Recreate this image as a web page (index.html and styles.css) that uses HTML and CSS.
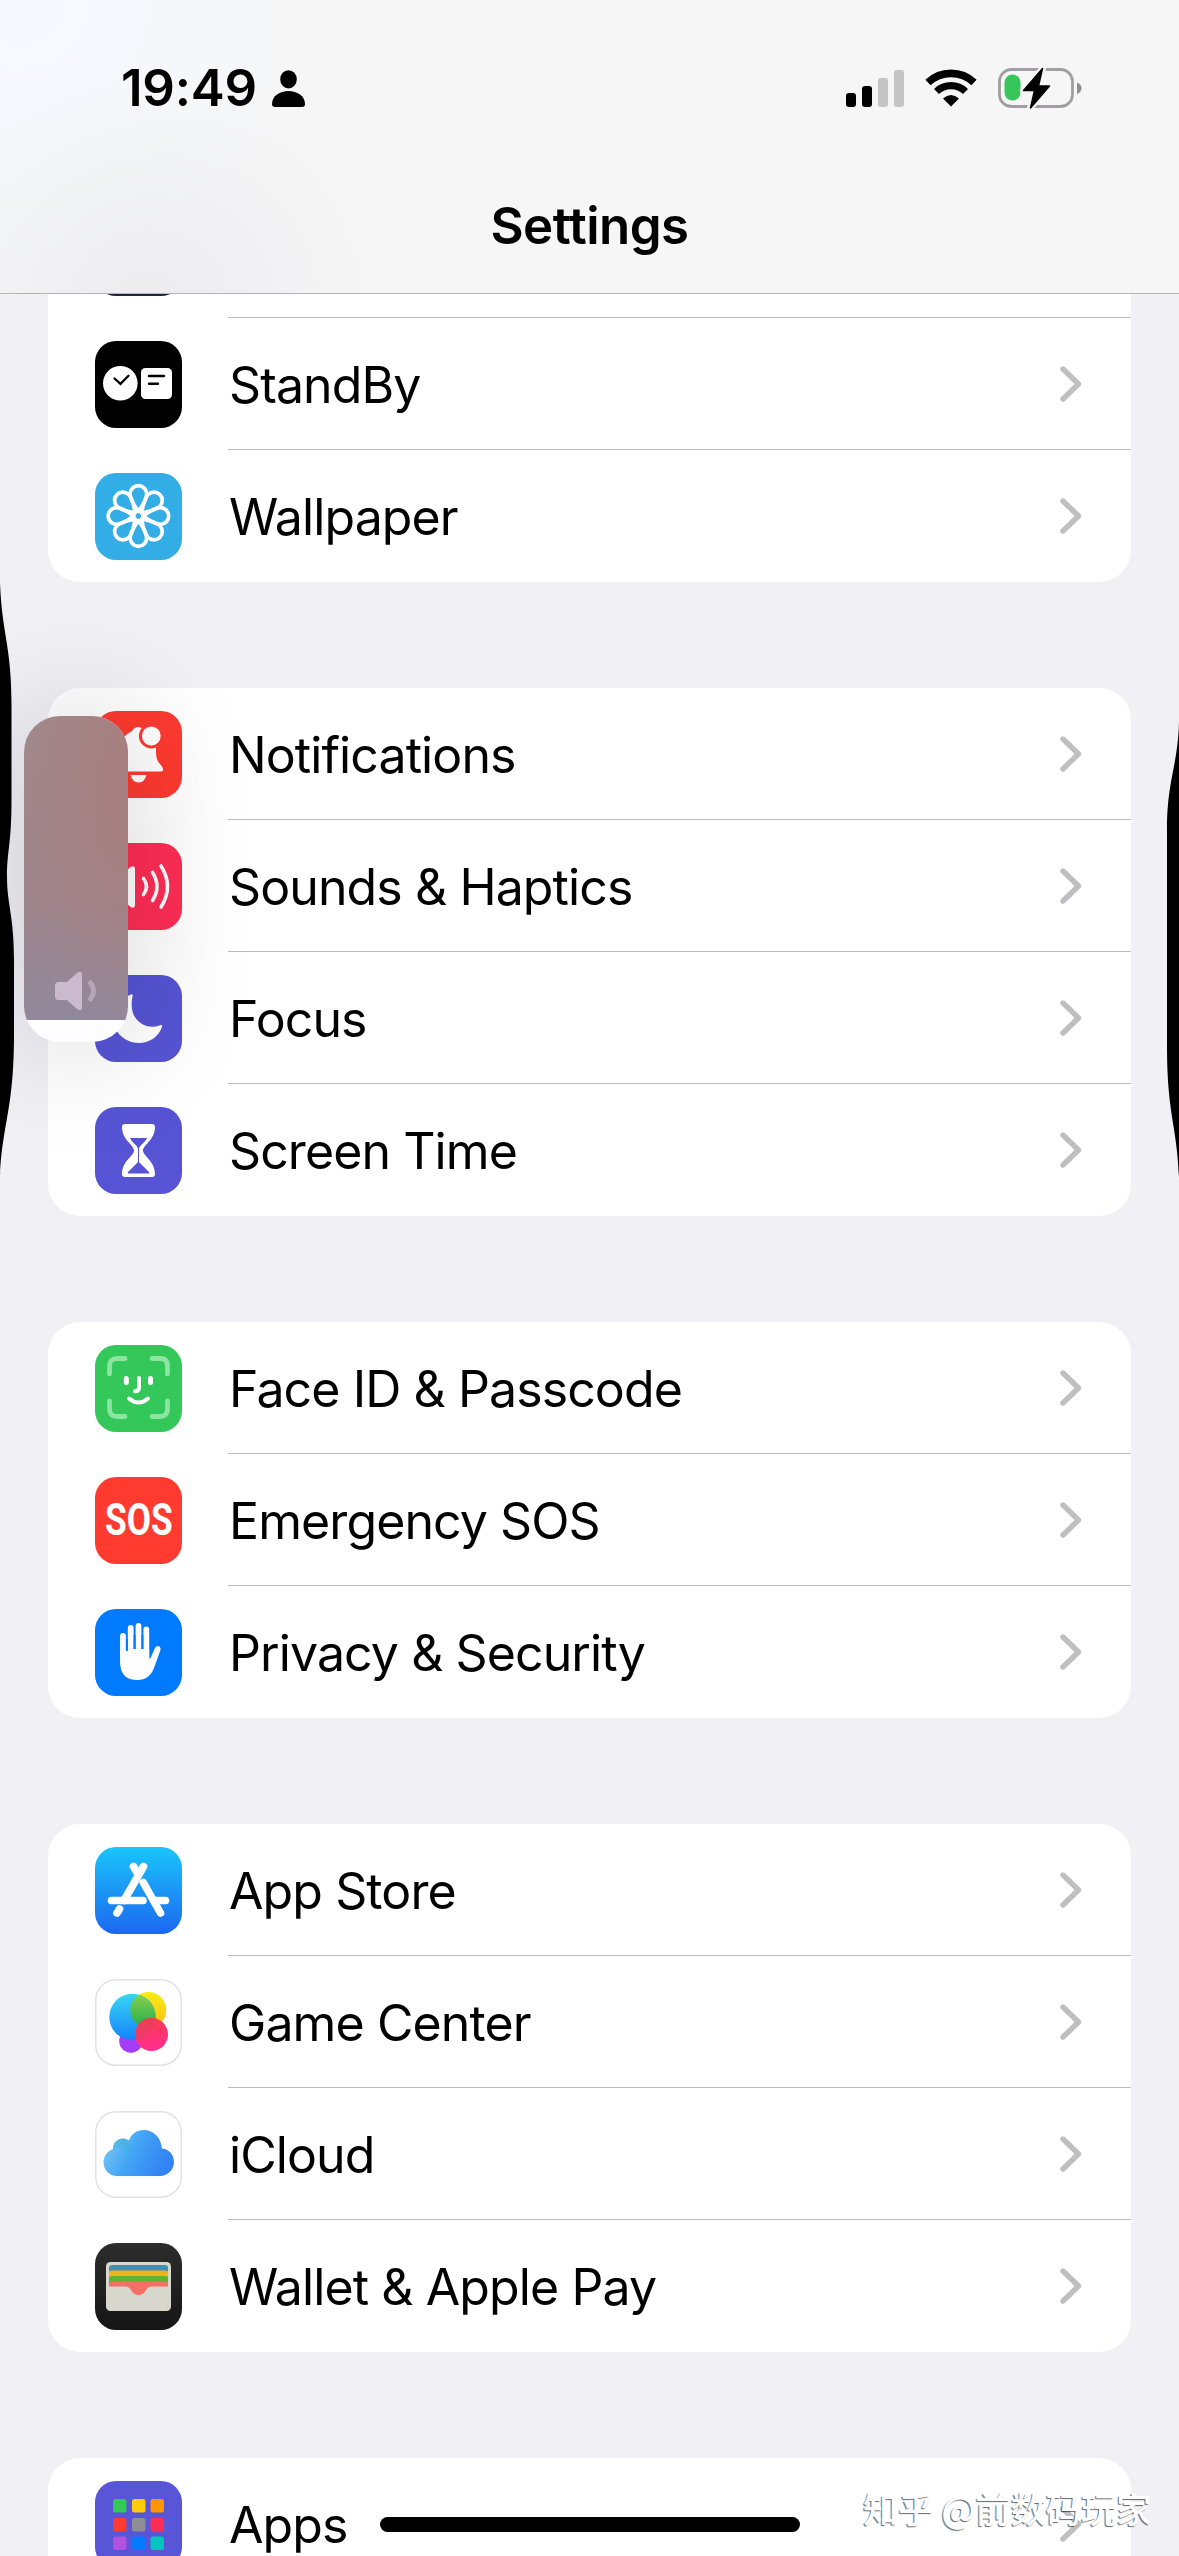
FILE: index.html
```
<!DOCTYPE html>
<html lang="en">
	<head>
		<meta charset="utf-8">
		<title>Settings</title>
		<link rel="stylesheet" href="styles.css">
	</head>
	<body>
		<svg class="defs" width="0" height="0">
			<symbol id="chevron" viewBox="0 0 22 36">
				<path d="M3 3 L18.5 18 L3 33" fill="none" stroke="#bfbfc1" stroke-width="5.4" stroke-linecap="round" stroke-linejoin="round"/>
			</symbol>
		</svg>
		<div class="screen">
		<header class="topbar">
			<div class="status">
				<div class="status-left">
					<span class="time">19:49</span>
					<svg class="person" viewBox="0 0 33 37">
						<ellipse cx="16.5" cy="9.3" rx="8.3" ry="9.1"/>
						<path d="M3 37 Q0 37 0 34 C0 26 8 21 16.5 21 C25 21 33 26 33 34 Q33 37 30 37 Z"/>
					</svg>
				</div>
				<div class="status-right">
					<svg class="signal" viewBox="0 0 58 37">
						<rect x="0" y="23" width="10" height="14" rx="3"/>
						<rect x="16" y="16" width="10" height="21" rx="3"/>
						<rect x="32" y="8" width="10" height="29" rx="3" fill="#c4c4c4"/>
						<rect x="48" y="0" width="10" height="37" rx="3" fill="#c4c4c4"/>
					</svg>
					<svg class="wifi" viewBox="0 0 52 38">
						<path d="M3 13.5 A33.5 33.5 0 0 1 49 13.5" fill="none" stroke="#000" stroke-width="7.6"/>
						<path d="M11.5 22.5 A21 21 0 0 1 40.5 22.5" fill="none" stroke="#000" stroke-width="7.2"/>
						<path d="M18 29.5 Q26 22.5 34 29.5 L26 37.5 Z"/>
					</svg>
					<svg class="battery" viewBox="0 0 84 42">
						<rect x="1.5" y="2.5" width="73" height="37" rx="12" fill="none" stroke="#a09ea0" stroke-width="2.8"/>
						<path d="M79 15.5 Q83.5 17 83.5 21 Q83.5 25 79 27 Z" fill="#8e8e90"/>
						<rect x="6.5" y="7.5" width="16" height="26" rx="8" fill="#35c759"/>
						<path d="M45 1 L25 23.5 H36 L32 41.5 L52 18.5 H41 Z" stroke="#f6f6f6" stroke-width="6" stroke-linejoin="round"/>
						<path d="M44.5 1.500 L25.5 23.5 H36.5 L32.5 41 L51.5 19 H40.5 Z" stroke="#000" stroke-width="1.5" stroke-linejoin="round"/>
					</svg>
				</div>
			</div>
			<h1 class="title">Settings</h1>
		</header>

		<main class="list">
			<section class="group first">
				<div class="row"><div class="icon navy"></div><div class="cell"></div></div>
				<div class="row">
					<svg class="icon" viewBox="0 0 87 87">
						<rect width="87" height="87"/>
						<circle cx="25.3" cy="42.3" r="17.3" fill="#fff"/>
						<path d="M19.5 37.5 L25.5 42.8 L33.5 34.8" fill="none" stroke="#000" stroke-width="2.3" stroke-linecap="round"/>
						<rect x="46" y="27" width="31" height="31" rx="4.5" fill="#fff"/>
						<path d="M54 35 H69 M54 42.7 H63" stroke="#000" stroke-width="2.4" stroke-linecap="round"/>
					</svg>
					<div class="cell"><span>StandBy</span><svg class="chevron"><use href="#chevron"/></svg></div>
				</div>
				<div class="row">
					<svg class="icon" viewBox="0 0 87 87">
						<defs><path id="petal" d="M0 -4.5 C-3 -9 -8.3 -16 -8.3 -22 A8.3 8.3 0 0 1 8.3 -22 C8.3 -16 3 -9 0 -4.5 Z"/></defs>
						<rect width="87" height="87" fill="#32ade6"/>
						<g transform="translate(43.4 43)" fill="none" stroke="#fff" stroke-width="3.7" stroke-linejoin="round">
							<use href="#petal"/>
							<use href="#petal" transform="rotate(45)"/>
							<use href="#petal" transform="rotate(90)"/>
							<use href="#petal" transform="rotate(135)"/>
							<use href="#petal" transform="rotate(180)"/>
							<use href="#petal" transform="rotate(225)"/>
							<use href="#petal" transform="rotate(270)"/>
							<use href="#petal" transform="rotate(315)"/>
							<circle r="4.8" stroke-width="2.6"/>
						</g>
					</svg>
					<div class="cell"><span>Wallpaper</span><svg class="chevron"><use href="#chevron"/></svg></div>
				</div>
			</section>

			<section class="group">
				<div class="row">
					<svg class="icon" viewBox="0 0 87 87">
						<rect width="87" height="87" fill="#ff3a30"/>
						<path d="M21 60.5 Q18 60.5 18.5 57 C20 54 25 50 25.5 44 C26 34 26 26 34 22 Q37 20.5 38.5 18 Q43 14 48 18 L61 36 C61 44 61 49 65 53 Q68.5 56.5 68 59 Q67.5 60.5 66 60.5 Z" fill="#fff"/>
						<path d="M35.5 64 H51.5 Q49.5 71.5 43.5 71.5 Q37.5 71.5 35.5 64 Z" fill="#fff"/>
						<circle cx="56.3" cy="25" r="12.4" fill="#ff3a30"/>
						<circle cx="56.3" cy="25" r="9.4" fill="#fff"/>
					</svg>
					<div class="cell"><span>Notifications</span><svg class="chevron"><use href="#chevron"/></svg></div>
				</div>
				<div class="row">
					<svg class="icon" viewBox="0 0 87 87">
						<rect width="87" height="87" fill="#ff2d55"/>
						<path d="M12 36 H22 L35 24.5 Q40 21.5 40 26 V62 Q40 66.5 35 63.5 L22 52 H12 Z" fill="#fff"/>
						<path d="M48.5 35.5 Q54.5 43.5 48.5 51.5 M57.5 29.5 Q66.5 43.5 57.5 57.5 M66 23 Q79 43.5 66 64" fill="none" stroke="#fff" stroke-width="3.6" stroke-linecap="round"/>
					</svg>
					<div class="cell"><span>Sounds &amp; Haptics</span><svg class="chevron"><use href="#chevron"/></svg></div>
				</div>
				<div class="row">
					<svg class="icon" viewBox="0 0 87 87">
						<rect width="87" height="87" fill="#5654d4"/>
						<path d="M36 19.5 C23 24 18 34 18 43 C18 57 30 68 44 68 C55 68 64 61 67 52 C67.5 50 66.5 49.5 64.5 50.5 C59 52.5 53 52 48 49.5 C38 44 35 34 37.5 21.5 C38 19.5 37.5 19 36 19.5 Z" fill="#fff"/>
					</svg>
					<div class="cell"><span>Focus</span><svg class="chevron"><use href="#chevron"/></svg></div>
				</div>
				<div class="row">
					<svg class="icon" viewBox="0 0 87 87">
						<rect width="87" height="87" fill="#5654d4"/>
						<path d="M30 17 H57 Q60 17 60 20 C60 33 48 38 48 43.5 C48 49 60 54 60 67 Q60 70 57 70 H30 Q27 70 27 67 C27 54 39 49 39 43.5 C39 38 27 33 27 20 Q27 17 30 17 Z" fill="#fff"/>
						<path d="M35 31 H52 C50 36 44.5 38 44 42 V55 L54 65 Q55 66.5 53 66.5 H34 Q32 66.5 33 65 L43 55 V42 C42.5 38 37 36 35 31 Z" fill="#5654d4"/>
					</svg>
					<div class="cell"><span>Screen Time</span><svg class="chevron"><use href="#chevron"/></svg></div>
				</div>
			</section>

			<section class="group">
				<div class="row">
					<svg class="icon" viewBox="0 0 87 87">
						<rect width="87" height="87" fill="#34c759"/>
						<path d="M14.5 29 V21 Q14.5 13.5 22 13.5 H30 M57 13.5 H65 Q72.5 13.5 72.5 21 V29 M72.5 56 V64 Q72.5 71.5 65 71.5 H57 M30 71.5 H22 Q14.5 71.5 14.5 64 V56" fill="none" stroke="#8ce5a0" stroke-width="4.8" stroke-linecap="round"/>
						<path d="M31.3 33.5 V37.5 M55.5 33.5 V37.5" stroke="#fff" stroke-width="5" stroke-linecap="round"/>
						<path d="M44 33 V42.5 Q44 46.3 40 46.3 M34 53.5 Q43.5 61.5 53 53.5" fill="none" stroke="#fff" stroke-width="4" stroke-linecap="round"/>
					</svg>
					<div class="cell"><span>Face ID &amp; Passcode</span><svg class="chevron"><use href="#chevron"/></svg></div>
				</div>
				<div class="row">
					<div class="icon sos"><span>SOS</span></div>
					<div class="cell"><span>Emergency SOS</span><svg class="chevron"><use href="#chevron"/></svg></div>
				</div>
				<div class="row">
					<svg class="icon" viewBox="0 0 87 87">
						<rect width="87" height="87" fill="#007aff"/>
						<path d="M28 27 V50 M35.7 19 V46 M43.5 17 V46 M51.3 20.5 V50" stroke="#fff" stroke-width="5.8" stroke-linecap="round"/>
						<path d="M25.1 40 H54.2 V49.5 Q55 50 56 48 L60 39 Q62 36 64.5 37.5 Q66 38.5 65.5 41 L59 59 Q54.5 71 42.5 71 Q25.1 71 25.1 53 Z" fill="#fff"/>
						<path d="M31.9 30 V42 M39.6 26 V40 M47.4 26 V40" stroke="#007aff" stroke-width="2"/>
					</svg>
					<div class="cell"><span>Privacy &amp; Security</span><svg class="chevron"><use href="#chevron"/></svg></div>
				</div>
			</section>

			<section class="group">
				<div class="row">
					<svg class="icon" viewBox="0 0 87 87">
						<defs><linearGradient id="store" x2="0" y2="1"><stop offset="0" stop-color="#19c5fb"/><stop offset="1" stop-color="#1c68f0"/></linearGradient></defs>
						<rect width="87" height="87" fill="url(#store)"/>
						<g fill="none" stroke="#fff" stroke-width="7.6" stroke-linecap="round">
							<path d="M16.5 53.5 H48"/>
							<path d="M38.5 19.5 L42 25.5"/>
							<path d="M24.5 62 L22 66"/>
							<path d="M48.3 35.5 L65.5 66"/>
							<path d="M48.5 19.5 L29 53.5"/>
							<path d="M61 53.5 H70.5"/>
						</g>
					</svg>
					<div class="cell"><span>App Store</span><svg class="chevron"><use href="#chevron"/></svg></div>
				</div>
				<div class="row">
					<svg class="icon bordered" viewBox="0 0 87 87">
						<defs>
							<linearGradient id="gcBlue" x2="0" y2="1"><stop offset="0" stop-color="#38d6f5"/><stop offset="1" stop-color="#1583fb"/></linearGradient>
							<linearGradient id="gcYellow" x2="0" y2="1"><stop offset="0" stop-color="#f7ec17"/><stop offset="1" stop-color="#ffbb12"/></linearGradient>
							<linearGradient id="gcGreen" x2="0" y2="1"><stop offset="0" stop-color="#8ed24e"/><stop offset="1" stop-color="#22ad4c"/></linearGradient>
							<linearGradient id="gcRed" x2="0" y2="1"><stop offset="0" stop-color="#fb3c4f"/><stop offset="1" stop-color="#ff2d92"/></linearGradient>
							<clipPath id="gcClip"><circle cx="37.500" cy="38" r="23.200"/></clipPath>
						</defs>
						<circle cx="36" cy="62" r="11.8" fill="#a63cf5"/>
						<circle cx="53.3" cy="31" r="18" fill="url(#gcYellow)"/>
						<circle cx="37.5" cy="38" r="23.2" fill="url(#gcBlue)"/>
						<circle cx="53.3" cy="31" r="18" fill="url(#gcGreen)" clip-path="url(#gcClip)"/>
						<circle cx="56.5" cy="55.5" r="16.5" fill="url(#gcRed)"/>
						<circle cx="56.5" cy="55.5" r="16.5" fill="#e0405c" opacity=".5" clip-path="url(#gcClip)"/>
					</svg>
					<div class="cell"><span>Game Center</span><svg class="chevron"><use href="#chevron"/></svg></div>
				</div>
				<div class="row">
					<svg class="icon bordered" viewBox="0 0 87 87">
						<defs><linearGradient id="cloud" x2="1" y2=".35"><stop offset="0" stop-color="#86d2f3"/><stop offset=".5" stop-color="#44a6f5"/><stop offset="1" stop-color="#3384f4"/></linearGradient></defs>
						<path d="M22 65 C14 65 8.5 58.5 8.5 51.5 C8.5 45 12.5 40 18 38 C18 31 23 27.5 28 27.5 C30.5 27.5 32.5 28.5 34 29.5 C36 23 42 19 48.5 19 C58 19 66 26 67 37.5 C74 38 79 44 79 51 C79 58.5 73 65 65 65 Z" fill="url(#cloud)"/>
						<path d="M18 38 C18 31 23 27.5 28 27.5 C33 27.5 36.5 31.5 36.5 35 C36.5 38 34 40 31 41 C31 36 25 34 18 38 Z" fill="#3fb3dc" opacity=".5"/>
					</svg>
					<div class="cell"><span>iCloud</span><svg class="chevron"><use href="#chevron"/></svg></div>
				</div>
				<div class="row">
					<svg class="icon" viewBox="0 0 87 87">
						<defs><linearGradient id="wallet" x2="0" y2="1"><stop offset="0" stop-color="#2d2d2d"/><stop offset="1" stop-color="#151515"/></linearGradient></defs>
						<rect width="87" height="87" fill="url(#wallet)"/>
						<rect x="11" y="19" width="65" height="49" rx="4.5" fill="#d8d7cd"/>
						<path d="M14 24.5 Q14 22 17 22 H70 Q73 22 73 24.5 V29 H14 Z" fill="#3f8fb8"/>
						<path d="M14 29 Q14 27.5 17 27.5 H70 Q73 27.5 73 29 V34 H14 Z" fill="#efb31b"/>
						<path d="M14 34.5 Q14 33 17 33 H70 Q73 33 73 34.5 V40 H14 Z" fill="#62b22f"/>
						<path d="M14 40 Q14 38.5 17 38.5 H70 Q73 38.5 73 40 V43.5 H56 Q53 43.5 51 47 Q48.5 52 43.5 52 Q38.5 52 36 47 Q34 43.5 31 43.5 H14 Z" fill="#f47067"/>
					</svg>
					<div class="cell"><span>Wallet &amp; Apple Pay</span><svg class="chevron"><use href="#chevron"/></svg></div>
				</div>
			</section>

			<section class="group last">
				<div class="row">
					<svg class="icon" viewBox="0 0 87 87">
						<rect width="87" height="87" fill="#5856d6"/>
						<rect x="18" y="18" width="13.5" height="13.5" rx="2.5" fill="#34c759"/>
						<rect x="37" y="18" width="13.5" height="13.5" rx="2.5" fill="#ffcc0a"/>
						<rect x="55.5" y="18" width="13.5" height="13.5" rx="2.5" fill="#ff9500"/>
						<rect x="18" y="37" width="13.5" height="13.5" rx="2.5" fill="#ff3b30"/>
						<rect x="37" y="37" width="13.5" height="13.5" rx="2.5" fill="#8e8e93"/>
						<rect x="55.5" y="37" width="13.5" height="13.5" rx="2.5" fill="#ff2d55"/>
						<rect x="18" y="55.5" width="13.5" height="13.5" rx="2.5" fill="#af52de"/>
						<rect x="37" y="55.5" width="13.5" height="13.5" rx="2.5" fill="#007aff"/>
						<rect x="55.5" y="55.5" width="13.5" height="13.5" rx="2.5" fill="#00c7be"/>
					</svg>
					<div class="cell"><span>Apps</span><svg class="chevron"><use href="#chevron"/></svg></div>
				</div>
			</section>
		</main>

		<!-- screen edges squeezed in by the hardware buttons -->
		<svg class="edge left" viewBox="0 0 16 600"><path d="M0 8 C2 60 11.5 70 11.5 130 V225 C11.5 270 7 275 7 302 C7 330 14 340 14 385 V460 C14 535 2 550 0 602 Z"/></svg>
		<svg class="edge right" viewBox="0 0 14 460"><path d="M14 2 C13 45 2 60 2 110 V325 C2 395 12 405 14 457 Z"/></svg>

		<div class="volume">
			<div class="volume-rest">
				<svg viewBox="0 0 42 40">
					<path d="M3.5 11 H12 L22 2 Q27 -1.500 27 4 V36 Q27 41.5 22 38 L12 29 H3.5 Q0 29 0 25.5 V14.5 Q0 11 3.5 11 Z" fill="#cbbacd"/>
					<path d="M35.5 12 Q41.5 20 35.5 28" fill="none" stroke="#b7a5bb" stroke-width="5" stroke-linecap="round"/>
				</svg>
			</div>
		</div>
		<div class="home-indicator"></div>
		<div class="watermark">知乎 @前数码玩家</div>
		</div>
	</body>
</html>
```
FILE: styles.css
```
* {
	box-sizing: border-box;
}
body {
	margin: 0;
	background: #f1f0f5;
	color: #000;
	font-family: Inter, "Liberation Sans", sans-serif;
}
.defs {
	display: block;
}
.screen {
	position: relative;
	width: 1179px;
	height: 2556px;
	overflow: hidden;
}
.topbar {
	position: relative;
	z-index: 1;
	height: 294px;
	border-bottom: 1px solid #b4b4b7;
	background:
		radial-gradient(circle at 150px 310px, #ececf0 0, rgba(240, 240, 243, 0) 230px),
		radial-gradient(circle at 20px 0, #f5f9fe 0, rgba(246, 248, 253, .8) 140px, rgba(246, 246, 246, 0) 300px),
		#f6f6f6;
}
.status {
	display: flex;
	justify-content: space-between;
	align-items: center;
	height: 176px;
	padding: 0 97px 0 121px;
}
.status-left, .status-right {
	display: flex;
	align-items: center;
}
.time {
	font-size: 51px;
	font-weight: 600;
	line-height: 60px;
	letter-spacing: -.2px;
}
.person {
	width: 33px;
	height: 37px;
	margin-left: 15px;
}
.signal {
	width: 58px;
	height: 37px;
}
.wifi {
	width: 52px;
	height: 38px;
	margin-left: 21px;
}
.battery {
	width: 84px;
	height: 42px;
	margin-left: 21px;
}
.title {
	margin: 0;
	padding-top: 20px;
	font-size: 51px;
	font-weight: 600;
	line-height: 60px;
	letter-spacing: -.5px;
	text-align: center;
}
.list {
	padding: 0 48px;
}
.group {
	margin-bottom: 106px;
	border-radius: 32px;
	background: #fff;
	overflow: hidden;
}
/* scrolled partly under the top bar */
.group.first {
	margin-top: -108px;
}
/* runs off the bottom of the screen */
.group.last {
	height: 98px;
	margin-bottom: 0;
	border-radius: 32px 32px 0 0;
}
.row {
	display: flex;
	align-items: flex-start;
	height: 132px;
	padding-left: 47px;
}
.icon {
	flex: none;
	width: 87px;
	height: 87px;
	margin-top: 23px;
	border-radius: 21px;
}
.navy {
	background: #1c2747;
}
.bordered {
	box-shadow: inset 0 0 0 1.5px #e2e2e5;
}
.sos {
	display: flex;
	justify-content: center;
	align-items: center;
	background: #ff3b30;
	color: #fff;
	font: 700 43.5px/54px Roboto, sans-serif;
}
.sos span {
	transform: scaleX(.81);
}
.cell {
	flex: 1;
	display: flex;
	justify-content: space-between;
	align-items: center;
	height: 132px;
	margin-left: 46px;
	padding: 1px 49px 0 0;
	border-bottom: 1px solid #bcbcbf;
	font-size: 50px;
	letter-spacing: -.9px;
}
.cell span {
	padding: 2px 0 0 1px;
}
.row:last-child .cell {
	border-bottom-color: transparent;
}
.chevron {
	width: 22px;
	height: 36px;
}
.edge {
	position: absolute;
}
.edge.left {
	left: 0;
	top: 575px;
	width: 16px;
	height: 600px;
}
.edge.right {
	right: 0;
	top: 720px;
	width: 14px;
	height: 460px;
}
.volume {
	position: absolute;
	left: 24px;
	top: 716px;
	width: 104px;
	height: 326px;
	border-radius: 36px;
	overflow: hidden;
	background: #fdfdff;
	box-shadow: 0 0 120px 10px rgba(0, 0, 20, .15);
}
.volume-rest {
	display: flex;
	justify-content: center;
	align-items: flex-end;
	height: 304px;
	padding-bottom: 9px;
	background:
		radial-gradient(ellipse at 100% 20%, rgba(174, 120, 118, .6), rgba(170, 120, 125, 0) 75%),
		linear-gradient(to bottom, #a0898c, #9f868c 60%, #91889b);
}
.volume-rest svg {
	width: 42px;
	height: 40px;
}
.home-indicator {
	position: absolute;
	left: 380px;
	top: 2517px;
	width: 420px;
	height: 15px;
	border-radius: 8px;
	background: #000;
}
.watermark {
	position: absolute;
	left: 863px;
	top: 2483px;
	color: #fff;
	font: 500 35.2px/50px "Noto Sans CJK SC", sans-serif;
	text-shadow: -1px 1px 1px rgba(0, 0, 0, .6);
	white-space: nowrap;
}
```
